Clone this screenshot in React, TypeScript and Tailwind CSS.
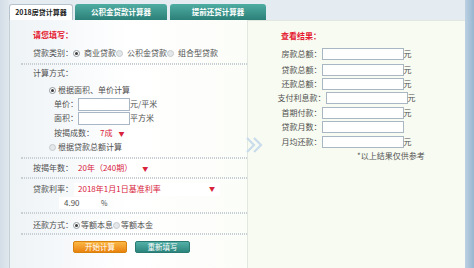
import React from 'react';

const font = { fontFamily: '"Noto Sans CJK SC", "Noto Sans", sans-serif' };

const Radio = ({ checked = false }: { checked?: boolean }) =>
  checked ? (
    <span className="inline-flex items-center justify-center w-[7px] h-[7px] rounded-full border border-[#8e989f] bg-white shrink-0">
      <span className="w-[3px] h-[3px] rounded-full bg-[#3b3b3b]" />
    </span>
  ) : (
    <span className="inline-block w-[7px] h-[7px] rounded-full border border-[#c4cace] bg-[#e3e7ea] shrink-0" />
  );

const Divider = ({ mt }: { mt: string }) => (
  <div className={`${mt} ml-[11px] h-[2px] border-t border-b border-dotted border-[#c8cfd4]`} />
);

const Caret = () => <span className="text-[6px] text-[#d8213a]">▼</span>;

const ResultRow = ({ label, unit = true, mt = '' }: { label: string; unit?: boolean; mt?: string }) => (
  <div className={`h-[14px] flex items-center justify-center pr-[20px] ${mt}`}>
    <span>{label}</span>
    <span className="w-[82px] h-[12px] bg-white border border-[#a9b7c4]" />
    <span className={unit ? 'w-[8px]' : 'w-[8px] invisible'}>元</span>
  </div>
);

export default function App() {
  return (
    <div style={font} className="w-[474px] h-[268px] flex overflow-hidden bg-[#e4ebf1] text-[8px] leading-none text-[#505050] relative">
      {/* left margin */}
      <div className="w-[9px] bg-gradient-to-r from-[#d3dde6] to-[#e1e8ee]" />

      <div className="w-[456px] flex flex-col">
        {/* tabs */}
        <div className="h-[20px] flex items-end">
          <div className="w-[64px] h-[16px] bg-white border border-b-0 border-[#b7c3cc] rounded-t-[3px] flex items-center justify-center font-bold text-[7px] text-[#222]">
            2018房贷计算器
          </div>
          <div className="ml-[2px] w-[92px] h-[16px] rounded-t-[3px] bg-gradient-to-b from-[#4fada3] to-[#2b8078] flex items-center justify-center font-bold text-[7.5px] text-white">
            公积金贷款计算器
          </div>
          <div className="ml-[3px] w-[96px] h-[16px] rounded-t-[3px] bg-gradient-to-b from-[#4fada3] to-[#2b8078] flex items-center justify-center font-bold text-[7.5px] text-white">
            提前还贷计算器
          </div>
        </div>

        <div className="flex-1 flex">
          {/* left form */}
          <div className="w-[238px] bg-gradient-to-r from-[#eef3f6] via-white to-[#fbfdf8] border-l border-[#c5d0d8]">
            <div className="mt-[8px] h-[14px] pl-[23px] flex items-center font-bold text-[#e5172f]">请您填写：</div>

            <div className="mt-[4px] h-[14px] pl-[23px] flex items-center">
              <span>贷款类别：</span>
              <Radio checked />
              <span className="ml-[4px]">商业贷款</span>
              <Radio />
              <span className="ml-[4px]">公积金贷款</span>
              <Radio />
              <span className="ml-[4px]">组合型贷款</span>
            </div>

            <Divider mt="mt-[3px]" />

            <div className="mt-[1px] h-[14px] pl-[23px] flex items-center">计算方式：</div>

            <div className="mt-[3px] h-[14px] pl-[39px] flex items-center">
              <Radio checked />
              <span className="ml-[2px]">根据面积、单价计算</span>
            </div>

            <div className="h-[14px] pl-[44px] flex items-center">
              <span className="w-[24px]">单价：</span>
              <span className="w-[52px] h-[13px] bg-white border border-[#a9b7c4]" />
              <span>元/平米</span>
            </div>

            <div className="h-[14px] pl-[44px] flex items-center">
              <span className="w-[24px]">面积：</span>
              <span className="w-[52px] h-[13px] bg-white border border-[#a9b7c4]" />
              <span>平方米</span>
            </div>

            <div className="mt-[1px] h-[14px] pl-[44px] flex items-center">
              <span>按揭成数：</span>
              <span className="ml-[6px] text-[#d8213a]">7成</span>
              <span className="ml-[6px]"><Caret /></span>
            </div>

            <div className="h-[14px] pl-[39px] flex items-center">
              <Radio />
              <span className="ml-[2px]">根据贷款总额计算</span>
            </div>

            <Divider mt="mt-[3px]" />

            <div className="mt-[2px] h-[14px] pl-[23px] flex items-center">
              <span>按揭年数：</span>
              <span className="ml-[5px] text-[#d8213a]">20年（240期）</span>
              <span className="ml-[10px]"><Caret /></span>
            </div>

            <Divider mt="mt-[2px]" />

            <div className="mt-[3px] h-[14px] pl-[23px] flex items-center">
              <span>贷款利率：</span>
              <span className="ml-[1px] w-[146px] h-[13px] bg-white flex items-center justify-between pl-[4px] pr-[5px]">
                <span className="text-[#d8213a]">2018年1月1日基准利率</span>
                <Caret />
              </span>
            </div>

            <div className="h-[14px] pl-[49px] flex items-center">
              <span className="w-[40px] h-[12px] bg-white flex items-center pl-[5px]">4.90</span>
              <span className="ml-[2px] text-[7px]">%</span>
            </div>

            <Divider mt="mt-[2px]" />

            <div className="mt-[4px] h-[14px] pl-[23px] flex items-center">
              <span>还款方式：</span>
              <Radio checked />
              <span className="ml-[1px]">等额本息</span>
              <Radio />
              <span className="ml-[1px]">等额本金</span>
            </div>

            <Divider mt="mt-[1px]" />

            <div className="mt-[6px] pl-[63px] flex gap-[8px]">
              <button className="w-[54px] h-[12px] rounded-[2px] bg-gradient-to-b from-[#fbb843] to-[#e98209] border border-[#d7820f] text-white text-[7.5px] flex items-center justify-center">
                开始计算
              </button>
              <button className="w-[55px] h-[12px] rounded-[2px] bg-gradient-to-b from-[#53b1a8] to-[#2c857d] border border-[#2a7a73] text-white text-[7.5px] flex items-center justify-center">
                重新填写
              </button>
            </div>
          </div>

          {/* right results */}
          <div className="w-[218px] bg-[#f7fbf1] border-l border-t border-[#e2e8e0]">
            <div className="mt-[8px] h-[14px] pl-[33px] flex items-center font-bold text-[#e5172f]">查看结果：</div>
            <ResultRow label="房款总额：" mt="mt-[4px]" />
            <ResultRow label="贷款总额：" mt="mt-[2px]" />
            <ResultRow label="还款总额：" />
            <ResultRow label="支付利息款：" />
            <ResultRow label="首期付款：" mt="mt-[1px]" />
            <ResultRow label="贷款月数：" unit={false} />
            <ResultRow label="月均还款：" mt="mt-[1px]" />
            <div className="h-[14px] pl-[109px] flex items-center text-[#555]">*以上结果仅供参考</div>
          </div>
        </div>
      </div>

      {/* right strip */}
      <div className="w-[9px] bg-gradient-to-r from-[#bcd1e2] to-[#98b6d0]" />

      {/* arrows over the divider */}
      <svg className="absolute left-[245px] top-[137px]" width="20" height="16" viewBox="0 0 20 16">
        <path d="M2 1 L9 8 L2 15" fill="none" stroke="#c8dcec" strokeWidth="2.2" />
        <path d="M9 1 L16 8 L9 15" fill="none" stroke="#c8dcec" strokeWidth="2.2" />
      </svg>
    </div>
  );
}
